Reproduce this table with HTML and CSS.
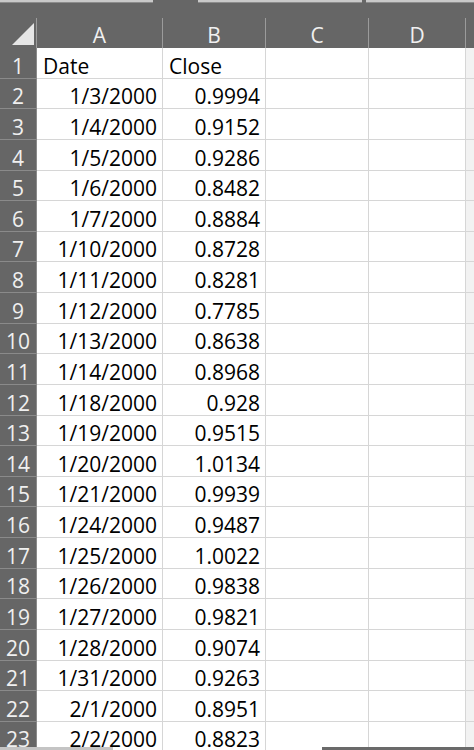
FILE: index.html
```html
<!DOCTYPE html>
<html>
<head>
<meta charset="utf-8">
<link rel="stylesheet" href="styles.css">
</head>
<body>
<div class="app">
  <div class="tabs">
    <div class="tab t1"></div>
    <div class="tab t2"></div>
    <div class="tab t3"></div>
  </div>
  <div class="sheet">
    <div class="corner"><svg width="37" height="30" viewBox="0 0 37 30"><polygon points="12,27 34,27 34,5" fill="#e6e6e6"/></svg></div>
    <div class="ch">A</div><div class="ch">B</div><div class="ch">C</div><div class="ch">D</div><div class="ch edge"></div>

    <div class="rh">1</div><div class="c l">Date</div><div class="c l">Close</div><div class="c"></div><div class="c"></div><div class="c e"></div>
    <div class="rh">2</div><div class="c">1/3/2000</div><div class="c">0.9994</div><div class="c"></div><div class="c"></div><div class="c e"></div>
    <div class="rh">3</div><div class="c">1/4/2000</div><div class="c">0.9152</div><div class="c"></div><div class="c"></div><div class="c e"></div>
    <div class="rh">4</div><div class="c">1/5/2000</div><div class="c">0.9286</div><div class="c"></div><div class="c"></div><div class="c e"></div>
    <div class="rh">5</div><div class="c">1/6/2000</div><div class="c">0.8482</div><div class="c"></div><div class="c"></div><div class="c e"></div>
    <div class="rh">6</div><div class="c">1/7/2000</div><div class="c">0.8884</div><div class="c"></div><div class="c"></div><div class="c e"></div>
    <div class="rh">7</div><div class="c">1/10/2000</div><div class="c">0.8728</div><div class="c"></div><div class="c"></div><div class="c e"></div>
    <div class="rh">8</div><div class="c">1/11/2000</div><div class="c">0.8281</div><div class="c"></div><div class="c"></div><div class="c e"></div>
    <div class="rh">9</div><div class="c">1/12/2000</div><div class="c">0.7785</div><div class="c"></div><div class="c"></div><div class="c e"></div>
    <div class="rh">10</div><div class="c">1/13/2000</div><div class="c">0.8638</div><div class="c"></div><div class="c"></div><div class="c e"></div>
    <div class="rh">11</div><div class="c">1/14/2000</div><div class="c">0.8968</div><div class="c"></div><div class="c"></div><div class="c e"></div>
    <div class="rh">12</div><div class="c">1/18/2000</div><div class="c">0.928</div><div class="c"></div><div class="c"></div><div class="c e"></div>
    <div class="rh">13</div><div class="c">1/19/2000</div><div class="c">0.9515</div><div class="c"></div><div class="c"></div><div class="c e"></div>
    <div class="rh">14</div><div class="c">1/20/2000</div><div class="c">1.0134</div><div class="c"></div><div class="c"></div><div class="c e"></div>
    <div class="rh">15</div><div class="c">1/21/2000</div><div class="c">0.9939</div><div class="c"></div><div class="c"></div><div class="c e"></div>
    <div class="rh">16</div><div class="c">1/24/2000</div><div class="c">0.9487</div><div class="c"></div><div class="c"></div><div class="c e"></div>
    <div class="rh">17</div><div class="c">1/25/2000</div><div class="c">1.0022</div><div class="c"></div><div class="c"></div><div class="c e"></div>
    <div class="rh">18</div><div class="c">1/26/2000</div><div class="c">0.9838</div><div class="c"></div><div class="c"></div><div class="c e"></div>
    <div class="rh">19</div><div class="c">1/27/2000</div><div class="c">0.9821</div><div class="c"></div><div class="c"></div><div class="c e"></div>
    <div class="rh">20</div><div class="c">1/28/2000</div><div class="c">0.9074</div><div class="c"></div><div class="c"></div><div class="c e"></div>
    <div class="rh">21</div><div class="c">1/31/2000</div><div class="c">0.9263</div><div class="c"></div><div class="c"></div><div class="c e"></div>
    <div class="rh">22</div><div class="c">2/1/2000</div><div class="c">0.8951</div><div class="c"></div><div class="c"></div><div class="c e"></div>
    <div class="rh">23</div><div class="c">2/2/2000</div><div class="c">0.8823</div><div class="c"></div><div class="c"></div><div class="c e"></div>
  </div>
  <div class="bottombar">
    <div class="bb b1"></div>
    <div class="bb b2"></div>
    <div class="bb b3"></div>
  </div>
</div>
</body>
</html>
```

FILE: styles.css
```css
html, body {
  margin: 0;
  padding: 0;
  background: #ffffff;
}
.app {
  position: relative;
  width: 474px;
  height: 750px;
  overflow: hidden;
  background: #ffffff;
  font-family: "Open Sans", "Noto Sans", sans-serif;
  font-size: 21px;
}
.tabs {
  display: flex;
  height: 18px;
  background: #666666;
  align-items: flex-start;
}
.tab {
  height: 2px;
  background: #c9c9c9;
  border-bottom: 1px solid #8c8c8c;
}
.t1 { width: 153px; }
.t2 { width: 164px; margin-left: 45px; }
.t3 { flex: 1; margin-left: 4px; }

.sheet {
  display: grid;
  grid-template-columns: 37px 126px 103px 103px 97px 8px;
  grid-template-rows: 30px;
  grid-auto-rows: 30.64px;
}
.corner {
  background: #666666;
  border-right: 1px solid #9b9b9b;
  height: 30px;
}
.corner svg { display: block; }
.ch {
  background: #666666;
  color: #f0f0f0;
  border-right: 1px solid #9b9b9b;
  display: flex;
  align-items: flex-end;
  justify-content: center;
  line-height: 20px;
  padding-bottom: 3px;
  box-sizing: border-box;
}
.ch.edge { border-right: none; }
.rh {
  background: #666666;
  color: #f0f0f0;
  border-bottom: 1px solid #8a8a8a;
  border-right: 1px solid #8a8a8a;
  display: flex;
  align-items: flex-end;
  justify-content: center;
  line-height: 20px;
  padding-bottom: 2px;
  box-sizing: border-box;
}
.c {
  color: #000000;
  border-right: 1px solid #d6d6d6;
  border-bottom: 1px solid #d6d6d6;
  display: flex;
  align-items: flex-end;
  justify-content: flex-end;
  line-height: 20px;
  padding: 0 5px 2px 6px;
  box-sizing: border-box;
  white-space: nowrap;
}
.c.l { justify-content: flex-start; }
.c.e { background: #f2f2f2; border-right: none; padding: 0; }

.bottombar {
  position: absolute;
  left: 0;
  right: 0;
  bottom: 0;
  height: 3px;
  display: flex;
}
.bb { height: 3px; }
.b1 { width: 113px; background: #c4c4c4; }
.b2 { width: 209px; }
.b3 { flex: 1; background: #6a6a6a; }
```
